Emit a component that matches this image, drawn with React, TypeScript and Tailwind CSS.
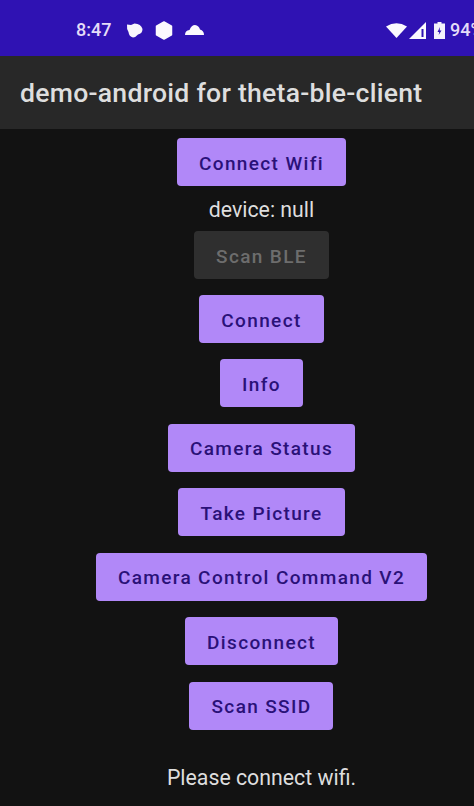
import React from 'react';

const buttons = ['Connect', 'Info', 'Camera Status', 'Take Picture', 'Camera Control Command V2', 'Disconnect', 'Scan SSID'];

function PurpleButton({ label }: { label: string }) {
  return (
    <button className="h-12 px-[22px] pt-[2px] rounded-[4px] bg-[#b188f8] text-[#2a1178] text-[19px] leading-none font-medium tracking-[1.36px] whitespace-nowrap">
      {label}
    </button>
  );
}

function StatusBar() {
  return (
    <div className="h-14 shrink-0 bg-[#2f12b3] flex items-center text-[#e4dcf8] pt-[4px]">
      <span className="ml-[76px] text-[18px] leading-none font-medium">8:47</span>
      <div className="ml-[15px] flex items-center gap-[12px]">
        <svg width="17" height="15" viewBox="0 0 17 15" fill="#f8f6fc">
          <path d="M1 1.5 L5 2 L8.5 0.5 Q15 0.8 16.5 6 Q16.5 10.5 12 11.5 Q10 14 7 14.5 Q3 13.5 2.5 9 Q0.5 6 1 1.5 Z" />
        </svg>
        <svg width="18" height="19" viewBox="0 0 18 19" fill="#fbf9fe" stroke="#fbf9fe" strokeWidth="1.5" strokeLinejoin="round">
          <path d="M9 1 L16.5 5.2 L16.5 13.8 L9 18 L1.5 13.8 L1.5 5.2 Z" />
        </svg>
        <svg width="19" height="10" viewBox="0 0 19 10" fill="#fbf9fe">
          <path d="M0 10 Q0 5.5 4.5 5 Q6.5 0 10 0 Q14 0.5 15 4.5 Q19 5.5 19 10 Z" />
        </svg>
      </div>
      <div className="ml-auto flex items-center shrink-0 w-[137px]">
        <svg width="21" height="15" viewBox="0 0 21 15" fill="#fbf9fe" className="shrink-0">
          <path d="M0 3.5 Q10.5 -3 21 3.5 L10.5 15 Z" />
        </svg>
        <svg width="17" height="17" viewBox="0 0 17 17" className="shrink-0 ml-[2px]">
          <path d="M0 17 L17 0 L17 17 Z" fill="#fbf9fe" />
          <path d="M12.5 7 L14.5 7 L14.5 15 L12.5 15 Z" fill="#2f12b3" />
        </svg>
        <svg width="11" height="17" viewBox="0 0 11 17" className="shrink-0 ml-[8px]">
          <path d="M3.5 0 H7.5 V1.5 H11 V17 H0 V1.5 H3.5 Z" fill="#f4f1fb" />
          <path d="M6 5 L3.5 10 H5.2 L4.7 13 L7.5 8.5 H5.7 Z" fill="#2f12b3" />
        </svg>
        <span className="ml-[5px] text-[18px] leading-none font-medium whitespace-nowrap">94%</span>
      </div>
    </div>
  );
}

export default function App() {
  return (
    <div className="h-[806px] w-[474px] overflow-hidden bg-[#121212]">
      <div className="w-[523px] flex flex-col font-['Roboto',sans-serif]">
        <StatusBar />
        <div className="h-[73px] shrink-0 bg-[#282828] flex items-center px-5 pt-[2px]">
          <h1 className="text-[26.6px] leading-none font-medium text-[#dedede] tracking-[0.25px] whitespace-nowrap">
            demo-android for theta-ble-client
          </h1>
        </div>

        <div className="flex flex-col items-center pt-[9px]">
          <PurpleButton label="Connect Wifi" />
          <div className="h-[45px] flex items-center pt-[2px] text-[21.3px] text-[#dedede]">device: null</div>
          <button
            disabled
            className="h-12 px-[22px] pt-[2px] rounded-[4px] bg-[#2f2f2f] text-[#6d6d6d] text-[19px] leading-none font-medium tracking-[1.36px]"
          >
            Scan BLE
          </button>
          <div className="mt-4 flex flex-col items-center gap-[16.45px]">
            {buttons.map(label => (
              <PurpleButton key={label} label={label} />
            ))}
          </div>
          <p className="mt-[36px] text-[21.3px] leading-6 text-[#dedede]">Please connect wifi.</p>
        </div>
      </div>
    </div>
  );
}
